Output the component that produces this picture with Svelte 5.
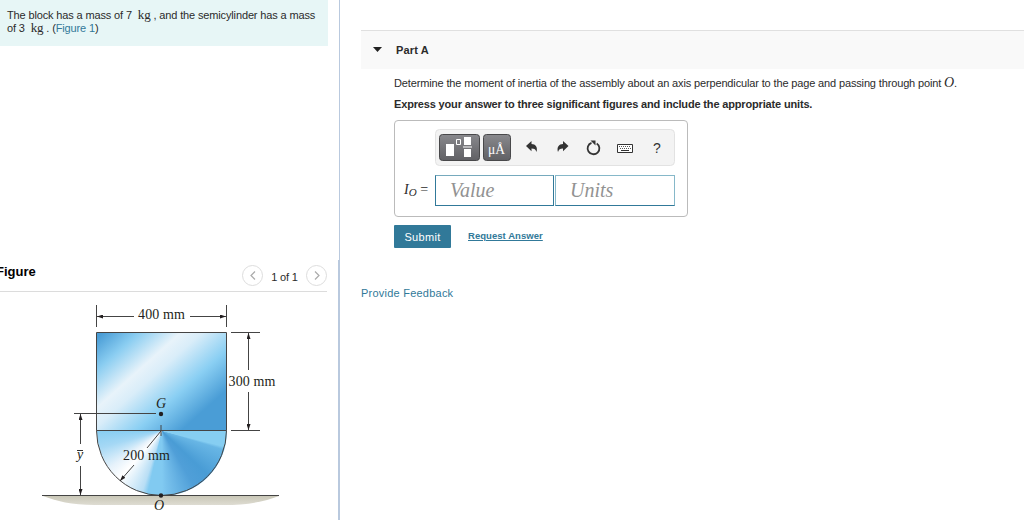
<script lang="ts">
  const value = "";
  const units = "";
</script>

<style>
  :global(body) {
    background: #fff;
    color: #2b2b2b;
    font: 11px/13px "Liberation Sans", Arial, sans-serif;
  }

  .page {
    display: flex;
    width: 1024px;
    height: 520px;
    overflow: hidden;
  }

  .left {
    display: flex;
    flex-direction: column;
    width: 338px;
    flex: none;
  }

  .intro {
    box-sizing: border-box;
    width: 328px;
    height: 46px;
    padding: 9px 0 0 7px;
    background: #e7f6f6;
    letter-spacing: -0.14px;
    white-space: nowrap;
  }

  .unit {
    margin-left: 3px;
    font: 13px/0 "Liberation Serif", serif;
  }

  a {
    color: #317999;
    text-decoration: none;
  }

  .figure-header {
    box-sizing: border-box;
    display: flex;
    align-items: center;
    width: 327px;
    height: 33px;
    margin-top: 213px;
    border-bottom: 1px solid #dcdcdc;
  }

  h2 {
    flex: 1;
    margin: -7px 0 0 -4px;
    color: #000;
    font-size: 13px;
    line-height: 15px;
  }

  .count {
    width: 43px;
    margin-top: 4px;
    letter-spacing: -0.15px;
    text-align: center;
  }

  .figure {
    display: block;
    width: 338px;
    height: 228px;
  }

  .semicylinder {
    width: 130px;
    height: 65px;
    border-radius: 0 0 65px 65px;
    background: conic-gradient(from 90deg at 50% 0, #86cef2 0deg 14deg, #68b6e5 17deg, #499cd5 44deg, #509fd8 60deg, #78c1ec 85deg, #81caf1 90deg 103deg, #b8def5 108deg, #fff 132deg, #e6f2fb 145deg, #a5d8f5 165deg, #89cef2 180deg);
  }

  .divider {
    width: 2px;
    flex: none;
    background: linear-gradient(90deg, #fff 50%, #b9c9de 50%) 0 0 / 2px 260px no-repeat, #b9c9de;
  }

  .right {
    width: 663px;
    margin-left: 21px;
  }

  .part-header {
    box-sizing: border-box;
    display: flex;
    align-items: center;
    height: 39px;
    margin-top: 30px;
    padding-left: 12px;
    border-top: 1px solid #e0e0e0;
    background: #f9f9f9;
    font-weight: bold;
    letter-spacing: 0.15px;
  }

  .part-header svg {
    margin-right: 14px;
  }

  .part {
    padding-left: 33px;
  }

  p {
    margin: 0;
    white-space: nowrap;
  }

  .question {
    margin-top: 8px;
    letter-spacing: -0.142px;
  }

  .question i {
    font: italic 14px/0 "Liberation Serif", serif;
  }

  .instructions {
    margin-top: 8px;
    font-weight: bold;
    letter-spacing: -0.16px;
  }

  .answer {
    box-sizing: border-box;
    width: 294px;
    height: 97px;
    margin-top: 9px;
    padding: 8px 0 0 9px;
    border: 1px solid #bbb;
    border-radius: 4px;
  }

  .toolbar {
    display: block;
    margin-left: 31px;
  }

  .fields {
    display: flex;
    align-items: center;
    margin-top: 8px;
  }

  .label {
    width: 31px;
    margin-top: -2px;
    font: 14px/16px "Liberation Serif", serif;
    white-space: nowrap;
  }

  .label small {
    position: relative;
    top: 2px;
    font-size: 11px;
    font-style: italic;
  }

  input {
    box-sizing: border-box;
    width: 119px;
    height: 31px;
    margin: 0 1px 0 0;
    padding: 0 0 1px 14px;
    border: 1px solid #317999;
    border-top-color: #76aabd;
    border-radius: 0;
    background: #fff;
    font: italic 20px "Liberation Serif", serif;
  }

  .units {
    width: 120px;
    border-color: #86b8c9;
    border-bottom-color: #317999;
  }

  input::placeholder {
    color: #929292;
    opacity: 1;
  }

  .actions {
    display: flex;
    margin-top: 8px;
  }

  button {
    width: 57px;
    height: 23px;
    margin: 0 17px 0 0;
    padding: 0;
    border: 0;
    border-radius: 1px;
    background: #317999;
    color: #fff;
    font: 11px "Liberation Sans", Arial, sans-serif;
    letter-spacing: 0.3px;
  }

  .request {
    margin-top: 4px;
    font-size: 9.5px;
    font-weight: bold;
    letter-spacing: 0.05px;
    text-decoration: underline;
  }

  .feedback {
    display: block;
    margin-top: 39px;
    letter-spacing: 0.23px;
  }
</style>

<div class="page">
  <div class="left">
    <div class="intro">
      The block has a mass of 7 <span class="unit">kg</span> , and the semicylinder has a mass<br />
      of 3 <span class="unit">kg</span> . (<a href="#figure">Figure 1</a>)
    </div>
    <div class="figure-header">
      <h2>Figure</h2>
      <svg width="21" height="21" fill="none" stroke="#ddd">
        <circle cx="10.5" cy="10.5" r="10" />
        <path d="M13 6.5 9 10.5l4 4" stroke="#aaa" stroke-width="1.2" />
      </svg>
      <span class="count">1 of 1</span>
      <svg width="21" height="21" fill="none" stroke="#ddd">
        <circle cx="10.5" cy="10.5" r="10" />
        <path d="m9 6.5 4 4-4 4" stroke="#aaa" stroke-width="1.2" />
      </svg>
    </div>
    <svg class="figure" id="figure" viewBox="0 292 338 228" font-family="Liberation Serif, serif" font-size="14" fill="#231f20">
      <defs>
        <linearGradient id="block" gradientUnits="userSpaceOnUse" x1="97" y1="332" x2="191" y2="437">
          <stop offset=".03" stop-color="#4a9dd6" />
          <stop offset=".2" stop-color="#8acdf1" />
          <stop offset=".4" stop-color="#e8f3fa" />
          <stop offset=".5" stop-color="#d9edf9" />
          <stop offset=".71" stop-color="#8acff3" />
          <stop offset=".92" stop-color="#4a9dd6" />
        </linearGradient>
        <linearGradient id="ground" x2="0" y2="1">
          <stop offset="0" stop-color="#c9c7b7" />
          <stop offset="1" stop-color="#dedcd2" />
        </linearGradient>
        <marker id="arrow" viewBox="0 0 6 4" refX="6" refY="2" markerWidth="6" markerHeight="4" markerUnits="userSpaceOnUse" orient="auto-start-reverse">
          <path d="M0 0 6 2 0 4z" />
        </marker>
      </defs>
      <path d="M43 496H279C264 502 246 505 224 505H94C72 505 56 501 43 496z" fill="url(#ground)" />
      <rect x="96.5" y="332.5" width="130" height="98" fill="url(#block)" />
      <foreignObject x="96.5" y="430.5" width="130" height="65">
        <div class="semicylinder"></div>
      </foreignObject>
      <g fill="none" stroke="#444">
        <path d="M96.5 332.5h130v98h-130zM96.5 430.5a65 65 0 0 0 130 0M42 495.5h237" />
        <path d="M96.5 305v22M226.5 305v22M231 332.5h29M231 430.5h29M74 413.5h82M161 425v11M156 430.5h10M161 431l-14 17" />
        <path marker-end="url(#arrow)" d="M134 316.5H97" />
        <path marker-end="url(#arrow)" d="M190 316.5h36" />
        <path marker-end="url(#arrow)" d="M248.5 370v-37" />
        <path marker-end="url(#arrow)" d="M248.5 392v38" />
        <path marker-end="url(#arrow)" d="M80.5 444v-30" />
        <path marker-end="url(#arrow)" d="M80.5 466v29" />
        <path marker-end="url(#arrow)" d="M134 465l-14 16" />
      </g>
      <circle cx="161" cy="414" r="2.2" />
      <circle cx="161" cy="495.5" r="2.2" />
      <text x="138" y="319" textLength="47">400 mm</text>
      <text x="228.5" y="386" textLength="47">300 mm</text>
      <text x="123" y="460" textLength="47">200 mm</text>
      <text x="156" y="408" font-style="italic">G</text>
      <text x="154" y="510" font-style="italic">O</text>
      <text x="77" y="459" font-style="italic">y</text>
      <path d="M77 450.5h6" stroke="#333" />
    </svg>
  </div>
  <div class="divider"></div>
  <div class="right">
    <div class="part-header">
      <svg width="9" height="6"><path d="M0 0h9L4.5 5z" fill="#222" /></svg>
      Part A
    </div>
    <div class="part">
      <p class="question">Determine the moment of inertia of the assembly about an axis perpendicular to the page and passing through point <i>O</i>.</p>
      <p class="instructions">Express your answer to three significant figures and include the appropriate units.</p>
      <div class="answer">
        <svg class="toolbar" width="241" height="38">
          <defs>
            <linearGradient id="key" x2="0" y2="1">
              <stop offset="0" stop-color="#89898d" />
              <stop offset="1" stop-color="#606064" />
            </linearGradient>
          </defs>
          <rect x=".5" y=".5" width="239" height="36" rx="4" fill="#f3f3f3" stroke="#e2e2e2" />
          <g fill="url(#key)" stroke="#48484a">
            <rect x="4.5" y="5.5" width="40" height="26" rx="3" />
            <rect x="48.5" y="5.5" width="27" height="26" rx="3" />
          </g>
          <g fill="#fff">
            <path d="M11 15h8v12h-8zM29 8h7v8h-7zM28 17.5h9v1h-9zM29 20h7v8h-7z" />
            <path d="M21.5 10.5h4v5h-4z" fill="none" stroke="#fff" />
            <text x="53" y="25" font-family="Liberation Serif, serif" font-size="15" textLength="17" lengthAdjust="spacingAndGlyphs">μÅ</text>
          </g>
          <g fill="#333">
            <path d="M91 17 96.5 12v3c4 0 6.500 3 5 8-.7-2.500-2-3.500-5-3.500v2.800z" />
            <path d="M133.500 17 128 12v3c-4 0-6.500 3-5 8 .7-2.500 2-3.500 5-3.500v2.800z" />
            <path d="M156.5 13.800a5.900 5.900 0 1 0 5.200.6" fill="none" stroke="#333" stroke-width="1.800" />
            <path d="M155.500 11.500h5v5z" />
            <path d="M182.5 15.5h15v8h-15z" fill="#fff" stroke="#333" />
            <path d="M184 17.5h12M185 19.500h11" fill="none" stroke="#555" stroke-dasharray="1 1" />
            <path d="M186 21h8v1h-8z" />
            <text x="218" y="24" font-family="Liberation Sans, sans-serif" font-size="14">?</text>
          </g>
        </svg>
        <div class="fields">
          <span class="label"><i>I</i><small>O</small> =</span>
          <input placeholder="Value" {value} />
          <input class="units" placeholder="Units" value={units} />
        </div>
      </div>
      <div class="actions">
        <button>Submit</button>
        <a class="request" href="#answer">Request Answer</a>
      </div>
    </div>
    <a class="feedback" href="#feedback">Provide Feedback</a>
  </div>
</div>
